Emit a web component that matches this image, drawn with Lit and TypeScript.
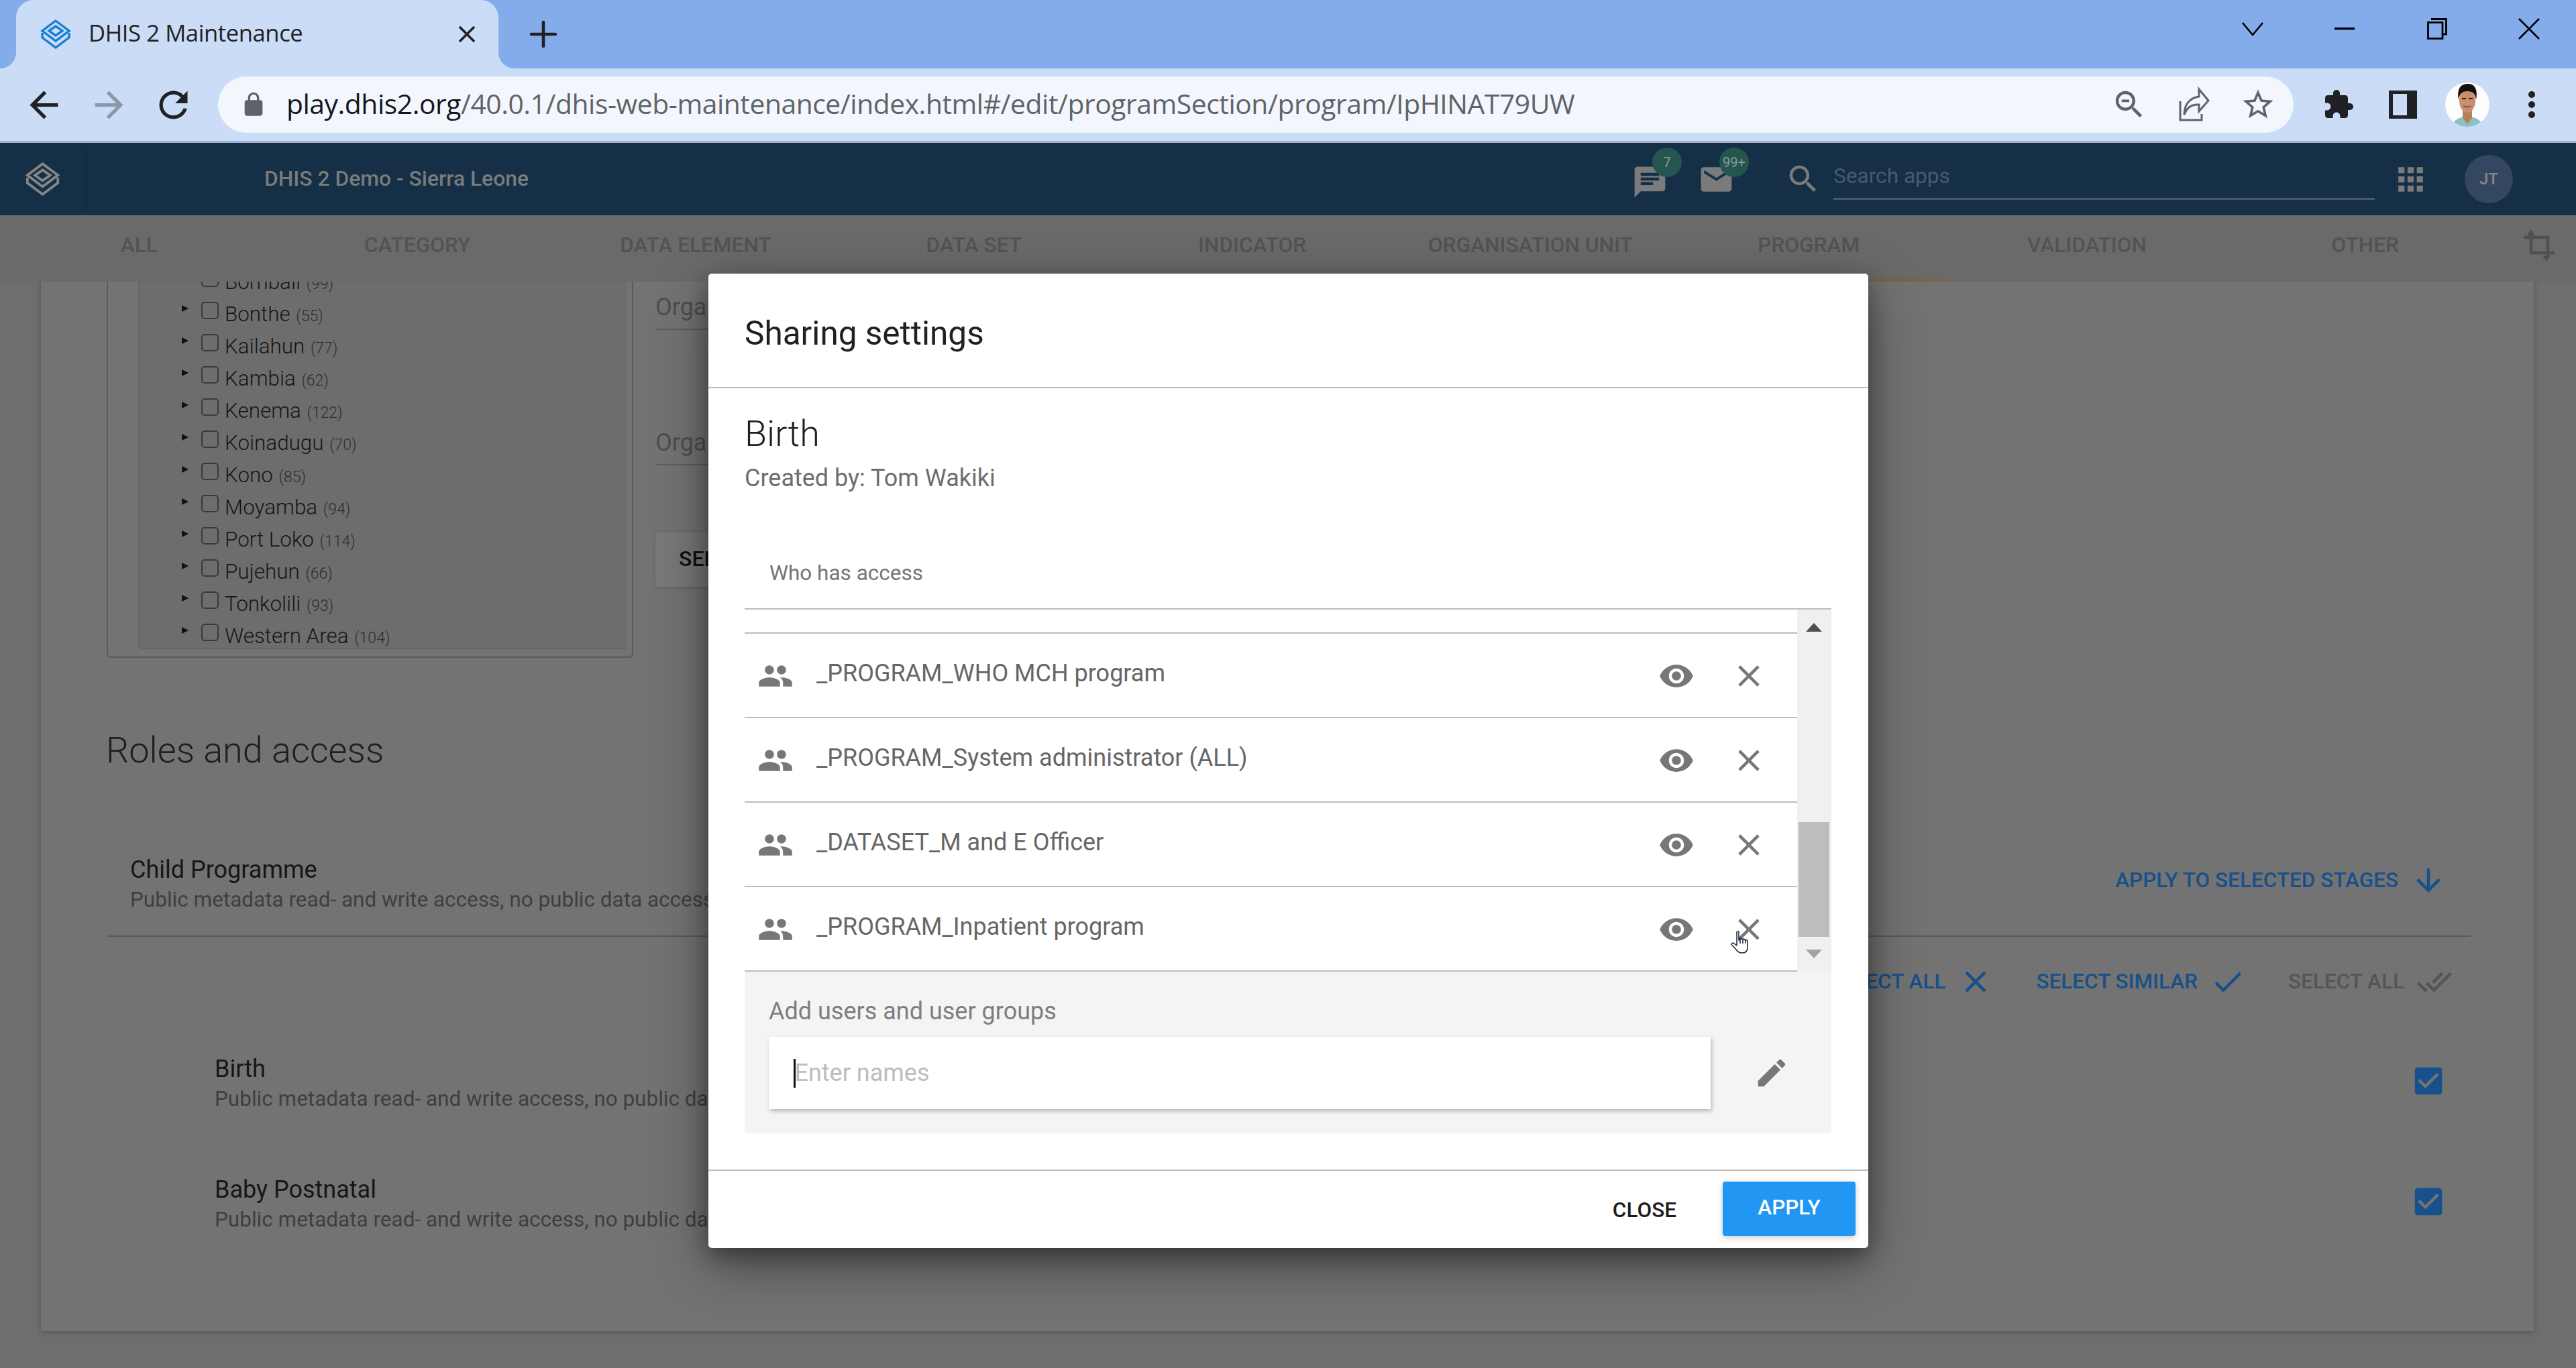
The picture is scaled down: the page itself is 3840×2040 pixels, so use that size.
import { LitElement, html, css } from "lit";
import { customElement } from "lit/decorators.js";

const P = {
  people: "M16 11c1.66 0 2.99-1.34 2.99-3S17.66 5 16 5c-1.66 0-3 1.34-3 3s1.34 3 3 3zm-8 0c1.66 0 2.99-1.34 2.99-3S9.66 5 8 5C6.34 5 5 6.34 5 8s1.34 3 3 3zm0 2c-2.33 0-7 1.17-7 3.5V19h14v-2.5c0-2.33-4.67-3.5-7-3.5zm8 0c-.29 0-.62.02-.97.05 1.16.84 1.97 1.97 1.97 3.45V19h6v-2.5c0-2.33-4.67-3.5-7-3.5z",
  eye: "M12 4.5C7 4.5 2.73 7.61 1 12c1.73 4.39 6 7.5 11 7.5s9.27-3.11 11-7.5c-1.73-4.39-6-7.5-11-7.5zM12 17c-2.76 0-5-2.24-5-5s2.24-5 5-5 5 2.24 5 5-2.24 5-5 5zm0-8c-1.66 0-3 1.34-3 3s1.34 3 3 3 3-1.34 3-3-1.34-3-3-3z",
  close: "M19 6.41L17.59 5 12 10.59 6.41 5 5 6.41 10.59 12 5 17.59 6.41 19 12 13.41 17.59 19 19 17.59 13.41 12z",
  edit: "M3 17.25V21h3.75L17.81 9.94l-3.75-3.75L3 17.25zM20.71 7.04c.39-.39.39-1.02 0-1.41l-2.34-2.34c-.39-.39-1.02-.39-1.41 0l-1.83 1.83 3.75 3.75 1.83-1.83z",
  chat: "M20 2H4c-1.1 0-1.99.9-1.99 2L2 22l4-4h14c1.1 0 2-.9 2-2V4c0-1.1-.9-2-2-2zM6 9h12v2H6V9zm8 5H6v-2h8v2zm4-6H6V6h12v2z",
  mail: "M20 4H4c-1.1 0-1.99.9-1.99 2L2 18c0 1.1.9 2 2 2h16c1.1 0 2-.9 2-2V6c0-1.1-.9-2-2-2zm0 4l-8 5-8-5V6l8 5 8-5v2z",
  search: "M15.5 14h-.79l-.28-.27C15.41 12.59 16 11.11 16 9.5 16 5.91 13.09 3 9.5 3S3 5.91 3 9.5 5.91 16 9.5 16c1.61 0 3.09-.59 4.23-1.57l.27.28v.79l5 4.99L20.49 19l-4.99-5zm-6 0C7.01 14 5 11.99 5 9.5S7.01 5 9.5 5 14 7.01 14 9.5 11.99 14 9.5 14z",
  apps: "M4 8h4V4H4v4zm6 12h4v-4h-4v4zm-6 0h4v-4H4v4zm0-6h4v-4H4v4zm6 0h4v-4h-4v4zm6-10v4h4V4h-4zm-6 4h4V4h-4v4zm6 6h4v-4h-4v4zm0 6h4v-4h-4v4z",
  check: "M9 16.17L4.83 12l-1.42 1.41L9 19 21 7l-1.41-1.41z",
  all: "M18 7l-1.41-1.41-6.34 6.34 1.41 1.41L18 7zm4.24-1.41L11.66 16.17 7.48 12l-1.41 1.41L11.66 19l12-12-1.42-1.41zM.41 13.41L6 19l1.41-1.41L1.83 12 .41 13.41z",
  down: "M20 12l-1.41-1.41L13 16.17V4h-2v12.17l-5.58-5.59L4 12l8 8 8-8z",
  box: "M19 3H5c-1.11 0-2 .9-2 2v14c0 1.1.89 2 2 2h14c1.11 0 2-.9 2-2V5c0-1.1-.89-2-2-2zm-9 14l-5-5 1.41-1.41L10 14.17l7.59-7.59L19 8l-9 9z",
  back: "M20 11H7.83l5.59-5.59L12 4l-8 8 8 8 1.41-1.41L7.83 13H20v-2z",
  forward: "M4 11h12.17l-5.59-5.59L12 4l8 8-8 8-1.41-1.41L16.17 13H4v-2z",
  reload: "M17.65 6.35C16.2 4.9 14.21 4 12 4c-4.42 0-7.99 3.58-7.99 8s3.57 8 7.99 8c3.73 0 6.84-2.55 7.73-6h-2.08c-.82 2.33-3.04 4-5.65 4-3.31 0-6-2.69-6-6s2.69-6 6-6c1.66 0 3.14.69 4.22 1.78L13 11h7V4l-2.35 2.35z",
  puzzle: "M20.5 11H19V7c0-1.1-.9-2-2-2h-4V3.5C13 2.12 11.88 1 10.5 1S8 2.12 8 3.5V5H4c-1.1 0-1.99.9-1.99 2v3.8H3.5c1.49 0 2.7 1.21 2.7 2.7s-1.21 2.7-2.7 2.7H2V20c0 1.1.9 2 2 2h3.8v-1.5c0-1.49 1.21-2.7 2.7-2.7 1.49 0 2.7 1.21 2.7 2.7V22H17c1.1 0 2-.9 2-2v-4h1.5c1.38 0 2.5-1.12 2.5-2.5S21.88 11 20.5 11z",
  star: "M22 9.24l-7.19-.62L12 2 9.19 8.63 2 9.24l5.46 4.73L5.82 21 12 17.27 18.18 21l-1.63-7.03L22 9.24zM12 15.4l-3.76 2.27 1-4.28-3.32-2.88 4.38-.38L12 6.1l1.71 4.04 4.38.38-3.32 2.88 1 4.28L12 15.4z",
  zoom: "M15.5 14h-.79l-.28-.27C15.41 12.59 16 11.11 16 9.5 16 5.91 13.09 3 9.5 3S3 5.91 3 9.5 5.91 16 9.5 16c1.61 0 3.09-.59 4.23-1.57l.27.28v.79l5 4.99L20.49 19l-4.99-5zm-6 0C7.01 14 5 11.99 5 9.5S7.01 5 9.5 5 14 7.01 14 9.5 11.99 14 9.5 14zM7 8.7h5v1.6H7z",
  lock: "M18 8h-1V6c0-2.76-2.24-5-5-5S7 3.24 7 6v2H6c-1.1 0-2 .9-2 2v10c0 1.1.9 2 2 2h12c1.1 0 2-.9 2-2V10c0-1.1-.9-2-2-2zM9 8V6c0-1.66 1.34-3 3-3s3 1.34 3 3v2H9z",
};

const ico = (d: string, cls = "i54") => html`<svg class="ic ${cls}" viewBox="0 0 24 24"><path d=${d}></path></svg>`;

const logo = (cls: string) => html`<svg class="${cls}" viewBox="0 0 48 44" fill="none" stroke="currentColor" stroke-width="3.4" stroke-linejoin="miter">
  <path d="M24 2 L44 17 L24 32 L4 17 Z"></path>
  <path d="M24 10 L34 17 L24 24 L14 17 Z"></path>
  <path d="M4 20 L4 27 L24 42 L44 27 L44 20"></path>
</svg>`;

const TREE: [string, number][] = [
  ["Bombali", 99], ["Bonthe", 55], ["Kailahun", 77], ["Kambia", 62], ["Kenema", 122], ["Koinadugu", 70],
  ["Kono", 85], ["Moyamba", 94], ["Port Loko", 114], ["Pujehun", 66], ["Tonkolili", 93], ["Western Area", 104],
];
const NAV = ["ALL", "CATEGORY", "DATA ELEMENT", "DATA SET", "INDICATOR", "ORGANISATION UNIT", "PROGRAM", "VALIDATION", "OTHER"];
const ACCESS = ["_PROGRAM_WHO MCH program", "_PROGRAM_System administrator (ALL)", "_DATASET_M and E Officer", "_PROGRAM_Inpatient program"];
const STAGES = ["Birth", "Baby Postnatal"];
const PUBLIC_TEXT = "Public metadata read- and write access, no public data access";

@customElement("app-root")
export class AppRoot extends LitElement {
  static styles = css`
    :host { display: block; position: relative; width: 3840px; height: 2040px; overflow: hidden; font-family: Roboto, sans-serif; background: #6e6e6e; }
    * { box-sizing: border-box; }
    .shell { display: flex; flex-direction: column; height: 2040px; }
    .ic { display: block; flex: none; fill: currentColor; }
    .i54 { width: 54px; height: 54px; }
    .i55 { width: 55px; height: 55px; }
    .i63 { width: 63px; height: 63px; }
    .i48 { width: 48px; height: 48px; }

    /* browser chrome */
    .tabbar { height: 102px; background: #85acea; display: flex; flex: none; }
    .tab { position: relative; margin-left: 24px; width: 719px; height: 102px; background: #cbdcf7; border-radius: 26px 26px 0 0; display: flex; align-items: center; padding: 0 0 0 35px; color: #202124; }
    .tab::before, .tab::after { content: ""; position: absolute; bottom: 0; width: 24px; height: 24px; }
    .tab::before { left: -24px; background: radial-gradient(circle at 0 0, transparent 23.5px, #cbdcf7 24.5px); }
    .tab::after { right: -24px; background: radial-gradient(circle at 100% 0, transparent 23.5px, #cbdcf7 24.5px); }
    .fav { width: 48px; height: 44px; color: #1a7fd0; flex: none; }
    .tabtitle { margin-left: 25px; margin-right: 1px; margin-top: -3px; font: 400 34.6px/1 "Open Sans", sans-serif; width: 500px; white-space: nowrap; letter-spacing: -0.4px; }
    .tabclose { width: 36px; height: 36px; margin-left: 45px; flex: none; }
    .newtab { width: 44px; height: 44px; margin: 29px 0 0 45px; color: #202124; flex: none; }
    .win { margin-left: auto; display: flex; padding-right: 1px; }
    .winslot { width: 137.5px; height: 86px; display: flex; align-items: center; justify-content: center; color: #000; }
    .winslot svg { display: block; }

    .toolbar { height: 111px; flex: none; background: #cbdcf7; border-bottom: 3px solid #a3b3cc; display: flex; align-items: center; padding: 0 0 0 34px; color: #202124; }
    .fwd { margin-left: 34px; color: #8a97a9; }
    .rel { margin-left: 33px; }
    .addr { margin-left: 35px; width: 3094px; height: 84px; border-radius: 42px; background: #f3f7fd; display: flex; align-items: center; padding: 0 26px 0 33px; color: #5f6368; flex: none; }
    .lockic { width: 40px; height: 40px; }
    .url { margin-left: 29px; margin-top: -3px; font: 400 40.8px/1 "Open Sans", sans-serif; white-space: nowrap; letter-spacing: -0.45px; color: #5f6368; }
    .url b { font-weight: 400; color: #15161a; }
    .addr .right { margin-left: auto; display: flex; align-items: center; gap: 44px; }
    .addr .sh { width: 50px; height: 54px; }
    .puz { margin-left: 43px; }
    .panel { margin-left: 51px; width: 42px; height: 42px; flex: none; background: #202124; padding: 5px 15px 5px 6px; }
    .panel i { display: block; width: 100%; height: 100%; background: #cbdcf7; }
    .face { margin-left: 42px; width: 66px; height: 66px; flex: none; }
    .dots { margin-left: 58px; display: flex; flex-direction: column; gap: 5px; }
    .dots i { display: block; width: 10px; height: 10px; border-radius: 50%; background: #202124; }

    /* app header */
    .hdr { height: 108px; flex: none; background: #142f46; display: flex; align-items: center; color: #7b7b7b; padding-right: 94px; }
    .brand { width: 130px; height: 96px; border-right: 2px solid #122a3f; display: flex; align-items: center; padding-left: 36px; color: #858585; }
    .brand svg { width: 55px; height: 50px; }
    .hdrtitle { margin-left: 264px; font: 500 31.8px/1 Roboto, sans-serif; white-space: nowrap; }
    .hright { margin-left: auto; display: flex; align-items: center; }
    .hb { position: relative; flex: none; }
    .hb.chat { margin-top: 9px; }
    .hb.mail { margin-left: 44px; }
    .badge { position: absolute; width: 44px; height: 44px; border-radius: 50%; background: #24564f; color: #8a9c98; font: 400 20px/44px Roboto, sans-serif; text-align: center; left: 31px; top: -24px; }
    .hb.mail .badge { left: 32px; top: -20px; }
    .srch { margin-left: 75px; margin-right: 18px; }
    .sinput { width: 807px; height: 62px; border-bottom: 3px solid #46586a; font: 400 31.6px/54px Roboto, sans-serif; color: #495a6b; }
    .appsi { margin-left: 26px; }
    .me { margin-left: 53px; width: 72px; height: 72px; border-radius: 50%; background: #344760; color: #868686; font: 500 24px/72px Roboto, sans-serif; text-align: center; }

    /* module tabs */
    .nav { height: 99px; flex: none; background: #6a6a6a; display: flex; color: #535353; align-items: stretch; }
    .nt { width: 414.8px; padding-bottom: 10px; display: flex; align-items: center; justify-content: center; font: 500 31.6px/1 Roboto, sans-serif; white-space: nowrap; }
    .nt.on { box-shadow: inset 0 -4px 0 #7a6340; }
    .cropi { width: 46px; height: 48px; margin: 21px 0 0 29px; stroke: #4f4f4f; fill: #4f4f4f; }

    /* page */
    .content { flex: 1; min-height: 0; overflow: hidden; background: #6e6e6e; }
    .card { margin: 0 63px 0 61px; height: 1635px; margin-top: -70px; background: #737373; box-shadow: 0 2px 8px rgba(0,0,0,.22); padding: 0 94px 0 98px; position: relative; }
    .top { display: flex; }
    .treebox { width: 785px; height: 631px; border: 2px solid #5b5b5b; border-top: none; border-radius: 0 0 6px 6px; padding-left: 45px; padding-right: 8px; flex: none; }
    .inner { height: 618px; border: 2px solid #666; border-top: none; border-right: none; border-radius: 0 0 0 6px; background: #6d6d6d; padding: 44px 0 0 63px; overflow: hidden; }
    .tr { height: 48px; display: flex; align-items: flex-start; white-space: nowrap; }
    .arr { margin-top: 13px; width: 0; height: 0; border-left: 10px solid #111; border-top: 5.5px solid transparent; border-bottom: 5.5px solid transparent; flex: none; }
    .cb { margin: 8px 0 0 19px; width: 26px; height: 26px; border: 2px solid #3a3a3a; border-radius: 5px; flex: none; }
    .lbl { margin-left: 9px; font: 300 31.4px/54px Roboto, sans-serif; color: #161616; }
    .lbl small { font-size: 23px; color: #2e2e2e; margin-left: 1px; }
    .side { margin-left: 33px; width: 760px; flex: none; }
    .fld { font: 400 36px/44px Roboto, sans-serif; color: #4e4e4e; padding-bottom: 10px; border-bottom: 2px solid #5e5e5e; white-space: nowrap; }
    .fld.a { margin-top: 86px; }
    .fld.b { margin-top: 146px; }
    .sel { margin-top: 100px; width: 240px; height: 81px; background: #787878; border-radius: 4px; box-shadow: 0 1px 6px rgba(0,0,0,.2); font: 500 32px/78px Roboto, sans-serif; color: #111; padding-left: 35px; }
    .roles { margin-top: 103px; margin-left: -1px; font: 300 54px/70px Roboto, sans-serif; color: #1f1f1f; white-space: nowrap; }
    .grp { margin-top: 119px; padding: 0 36px 30px 35px; border-bottom: 2px solid #5a5a5a; display: flex; justify-content: space-between; align-items: flex-start; }
    .t { font: 400 36px/46px Roboto, sans-serif; color: #161616; white-space: nowrap; padding-top: 1px; margin-bottom: -1px; }
    .s { font: 400 31.5px/46px Roboto, sans-serif; color: #3f3f3f; white-space: nowrap; }
    .act { display: flex; align-items: center; gap: 18px; font: 500 31.5px/54px Roboto, sans-serif; color: #17508a; white-space: nowrap; }
    .act.dis { color: #555; }
    .grp .act { margin-top: 13px; }
    .acts { margin-top: 40px; padding-right: 27px; display: flex; justify-content: flex-end; gap: 63px; }
    .stage { height: 180px; padding: 0 36px 0 161px; display: flex; justify-content: space-between; align-items: flex-start; }
    .stage.first { margin-top: 79px; }
    .stage .ic { margin-top: 15px; color: #17508a; }

    /* modal */
    .modal { position: absolute; left: 1056px; top: 408px; width: 1729px; height: 1453px; background: #fff; border-radius: 5px; box-shadow: 0 24px 80px rgba(0,0,0,.42), 0 12px 30px rgba(0,0,0,.3); display: flex; flex-direction: column; }
    .mh { height: 171px; flex: none; border-bottom: 2px solid #bdbdbd; padding: 11px 0 0 54px; display: flex; align-items: center; font: 400 49.5px/1 Roboto, sans-serif; color: #212121; }
    .mb { padding: 0 55px 0 54px; flex: none; }
    .mt { margin-top: 33px; font: 300 54px/70px Roboto, sans-serif; color: #222; }
    .mc { margin-top: 9px; font: 400 36px/44px Roboto, sans-serif; color: #6e6e6e; }
    .who { margin-top: 98px; padding: 0 0 30px 37px; border-bottom: 2px solid #bdbdbd; font: 400 31.5px/44px Roboto, sans-serif; color: #757575; }
    .list { height: 540px; display: flex; }
    .rows { flex: 1; min-width: 0; }
    .stub { height: 36px; border-bottom: 2px solid #bdbdbd; }
    .row { height: 126px; border-bottom: 2px solid #bdbdbd; display: flex; align-items: center; color: #777; padding: 2px 0 0 19px; position: relative; }
    .row .name { margin-left: 34px; margin-top: -8px; font: 400 36px/1 Roboto, sans-serif; color: #666; flex: 1; white-space: nowrap; }
    .row .x { margin-left: 54px; margin-right: 45px; }
    .sb { width: 51px; flex: none; background: #f0f0f0; position: relative; padding: 0 2px; }
    .sb .up, .sb .dn { position: absolute; left: 13px; width: 0; height: 0; border-left: 12.5px solid transparent; border-right: 12.5px solid transparent; }
    .sb .up { top: 20px; border-bottom: 13px solid #505050; }
    .sb .dn { top: 507px; border-top: 13px solid #a3a3a3; }
    .sb .th { position: absolute; left: 2px; right: 3px; top: 317px; height: 171px; background: #bdbdbd; }
    .cursor { position: absolute; left: 1524px; top: 980px; width: 27px; height: 34px; }
    .add { height: 241px; background: #f4f4f4; padding: 37px 0 0 36px; }
    .addl { font: 400 36px/44px Roboto, sans-serif; color: #7e7e7e; }
    .addr2 { margin-top: 16px; display: flex; align-items: center; color: #777; }
    .inp { width: 1404px; height: 108px; background: #fff; box-shadow: 2px 3px 6px rgba(0,0,0,.25); display: flex; align-items: center; padding-left: 37px; font: 400 36px/1 Roboto, sans-serif; color: #bdbdbd; }
    .caret { width: 2.5px; height: 43px; background: #111; margin-right: -1px; flex: none; }
    .pen { margin-left: 64px; }
    .mf { margin-top: 54px; border-top: 2px solid #bdbdbd; height: 117px; display: flex; align-items: flex-start; justify-content: flex-end; padding: 16px 19px 0 0; }
    .cls { margin-top: 21px; margin-right: 69px; font: 500 31.5px/44px Roboto, sans-serif; color: #1d1d1d; }
    .apl { width: 198px; height: 81px; background: #2196f3; border-radius: 4px; color: #fff; font: 500 31.5px/78px Roboto, sans-serif; text-align: center; box-shadow: 0 3px 10px rgba(0,0,0,.2); }
  `;

  render() {
    return html`
      <div class="shell">
        <div class="tabbar">
          <div class="tab">
            ${logo("fav")}
            <div class="tabtitle">DHIS 2 Maintenance</div>
            <svg class="tabclose" viewBox="0 0 36 36" stroke="#202124" stroke-width="3.6" fill="none"><path d="M7 7 L29 29 M29 7 L7 29"></path></svg>
          </div>
          <svg class="newtab" viewBox="0 0 44 44" stroke="#202124" stroke-width="4.6" fill="none" stroke-linecap="round"><path d="M22 4 V40 M4 22 H40"></path></svg>
          <div class="win">
            <div class="winslot"><svg width="34" height="22" viewBox="0 0 34 22" fill="none" stroke="#000" stroke-width="2.6"><path d="M2 2 L17 20 L32 2"></path></svg></div>
            <div class="winslot"><svg width="30" height="4" viewBox="0 0 30 4"><rect width="30" height="3.4" fill="#000"></rect></svg></div>
            <div class="winslot"><svg width="30" height="32" viewBox="0 0 30 32" fill="none" stroke="#000" stroke-width="2.8"><path d="M6 1.5 H28.5 V24 H23"></path><rect x="1.5" y="6.5" width="21.5" height="24"></rect></svg></div>
            <div class="winslot"><svg width="32" height="32" viewBox="0 0 32 32" fill="none" stroke="#000" stroke-width="2.6"><path d="M1 1 L31 31 M31 1 L1 31"></path></svg></div>
          </div>
        </div>

        <div class="toolbar">
          ${ico(P.back, "i63")}
          <span class="fwd">${ico(P.forward, "i63")}</span>
          <span class="rel">${ico(P.reload, "i63")}</span>
          <div class="addr">
            ${ico(P.lock, "lockic")}
            <div class="url"><b>play.dhis2.org</b>/40.0.1/dhis-web-maintenance/index.html#/edit/programSection/program/IpHINAT79UW</div>
            <div class="right">
              ${ico(P.zoom)}
              <svg class="sh" viewBox="0 0 50 54" fill="none" stroke="#5f6368" stroke-width="3"><path d="M5 22 V50 H37 V41"></path><path d="M33 4 L47 21 L33 37 V27 C22 26 15 31 11 42 C11 27 19 17 33 15 Z"></path></svg>
              ${ico(P.star)}
            </div>
          </div>
          <span class="puz">${ico(P.puzzle, "i48")}</span>
          <div class="panel"><i></i></div>
          <svg class="face" viewBox="0 0 66 66">
            <defs><clipPath id="fc"><circle cx="33" cy="33" r="33"></circle></clipPath></defs>
            <g clip-path="url(#fc)">
              <rect width="66" height="66" fill="#fdfdfd"></rect>
              <path d="M10 66 C12 55 22 51 33 51 C44 51 54 55 56 66 Z" fill="#8fc0c8"></path>
              <path d="M26 42 H40 V53 L33 62 L26 53 Z" fill="#b67f5d"></path>
              <ellipse cx="33" cy="27" rx="12" ry="18" fill="#c98f6c"></ellipse>
              <path d="M20 26 C17 8 24 2 34 2 C44 2 49 10 46 26 C45 17 42 13 33 13 C25 13 21 17 20 26 Z" fill="#14100e"></path>
              <rect x="25" y="23" width="6" height="2" fill="#2a1d16"></rect>
              <rect x="35" y="23" width="6" height="2" fill="#2a1d16"></rect>
              <path d="M27 35 Q33 39 39 35 Q33 37 27 35 Z" fill="#fff" stroke="#7c4434" stroke-width="1"></path>
            </g>
          </svg>
          <div class="dots"><i></i><i></i><i></i></div>
        </div>

        <div class="hdr">
          <div class="brand">${logo("")}</div>
          <div class="hdrtitle">DHIS 2 Demo - Sierra Leone</div>
          <div class="hright">
            <div class="hb chat">${ico(P.chat, "i55")}<span class="badge">7</span></div>
            <div class="hb mail">${ico(P.mail, "i55")}<span class="badge">99+</span></div>
            <span class="srch">${ico(P.search)}</span>
            <div class="sinput">Search apps</div>
            <span class="appsi">${ico(P.apps, "i55")}</span>
            <div class="me">JT</div>
          </div>
        </div>

        <div class="nav">
          ${NAV.map((n) => html`<div class="nt ${n === "PROGRAM" ? "on" : ""}">${n}</div>`)}
          <svg class="cropi" viewBox="0 0 46 48" stroke-width="4.4" fill="none">
            <path d="M11 8 V35 H46 M0 12 H36 V40" fill="none"></path>
            <path d="M11 0 L17 9 H5 Z M34 48 L28 39 H40 Z" stroke="none"></path>
          </svg>
        </div>

        <div class="content">
          <div class="card">
            <div class="top">
              <div class="treebox">
                <div class="inner">
                  ${TREE.map(([n, c]) => html`<div class="tr"><i class="arr"></i><i class="cb"></i><span class="lbl">${n} <small>(${c})</small></span></div>`)}
                </div>
              </div>
              <div class="side">
                <div class="fld a">Organisation unit group</div>
                <div class="fld b">Organisation unit level</div>
                <div class="sel">SELECT</div>
              </div>
            </div>
            <div class="roles">Roles and access</div>
            <div class="grp">
              <div>
                <div class="t">Child Programme</div>
                <div class="s">${PUBLIC_TEXT}</div>
              </div>
              <div class="act">APPLY TO SELECTED STAGES ${ico(P.down)}</div>
            </div>
            <div class="acts">
              <div class="act">DESELECT ALL ${ico(P.close)}</div>
              <div class="act">SELECT SIMILAR ${ico(P.check)}</div>
              <div class="act dis">SELECT ALL ${ico(P.all)}</div>
            </div>
            ${STAGES.map((s, i) => html`<div class="stage ${i === 0 ? "first" : ""}">
              <div><div class="t">${s}</div><div class="s">${PUBLIC_TEXT}</div></div>
              ${ico(P.box)}
            </div>`)}
          </div>
        </div>
      </div>

      <div class="modal">
        <div class="mh">Sharing settings</div>
        <div class="mb">
          <div class="mt">Birth</div>
          <div class="mc">Created by: Tom Wakiki</div>
          <div class="who">Who has access</div>
          <div class="list">
            <div class="rows">
              <div class="stub"></div>
              ${ACCESS.map((a) => html`<div class="row">
                ${ico(P.people)}
                <div class="name">${a}</div>
                ${ico(P.eye)}
                <span class="x">${ico(P.close)}</span>
              </div>`)}
            </div>
            <div class="sb"><i class="up"></i><i class="th"></i><i class="dn"></i></div>
          </div>
          <div class="add">
            <div class="addl">Add users and user groups</div>
            <div class="addr2">
              <div class="inp"><i class="caret"></i>Enter names</div>
              <span class="pen">${ico(P.edit)}</span>
            </div>
          </div>
        </div>
        <div class="mf">
          <div class="cls">CLOSE</div>
          <div class="apl">APPLY</div>
        </div>
        <svg class="cursor" viewBox="0 0 27 34" fill="#fff" stroke="#14233a" stroke-width="1.5" stroke-linejoin="round">
          <path d="M9 2 C9 0.5 12 0.5 12 2 V14 L14 11.5 C15 11 16.5 11.5 16.5 12.5 L18 12 C19 12 20.5 12.5 20.5 13.5 L22 13.5 C23.5 13.5 25 14.5 25 16 V25 C25 30 22 33 17 33 C12 33 10 31 8 28 L1.5 21 C0.5 19 3 17 5 19 L9 22 Z"></path>
          <path d="M14 12 V19 M18 13 V19 M22 14 V19" fill="none"></path>
        </svg>
      </div>
    `;
  }
}
